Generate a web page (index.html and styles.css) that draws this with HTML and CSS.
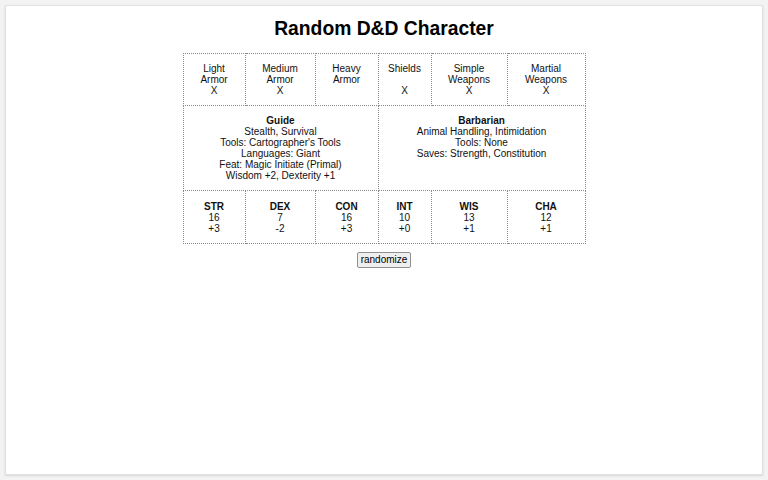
FILE: index.html
```html
<!DOCTYPE html>
<html lang="en">
<head>
<meta charset="utf-8">
<title>Random D&amp;D Character</title>
<link rel="stylesheet" href="styles.css">
</head>
<body>
<main class="card">
  <h1 class="title">Random D&amp;D Character</h1>
  <table class="sheet">
    <colgroup>
      <col class="c1"><col class="c2"><col class="c3"><col class="c4"><col class="c5"><col class="c6">
    </colgroup>
    <tr class="prof">
      <td>Light<br>Armor<br>X</td>
      <td>Medium<br>Armor<br>X</td>
      <td>Heavy<br>Armor<br>&nbsp;</td>
      <td>Shields<br>&nbsp;<br>X</td>
      <td>Simple<br>Weapons<br>X</td>
      <td>Martial<br>Weapons<br>X</td>
    </tr>
    <tr class="origin">
      <td colspan="3"><b>Guide</b><br>Stealth, Survival<br>Tools: Cartographer's Tools<br>Languages: Giant<br>Feat: Magic Initiate (Primal)<br>Wisdom +2, Dexterity +1</td>
      <td colspan="3"><b>Barbarian</b><br>Animal Handling, Intimidation<br>Tools: None<br>Saves: Strength, Constitution</td>
    </tr>
    <tr class="stats">
      <td><b>STR</b><br>16<br>+3</td>
      <td><b>DEX</b><br>7<br>-2</td>
      <td><b>CON</b><br>16<br>+3</td>
      <td><b>INT</b><br>10<br>+0</td>
      <td><b>WIS</b><br>13<br>+1</td>
      <td><b>CHA</b><br>12<br>+1</td>
    </tr>
  </table>
  <button class="randomize" type="button">randomize</button>
</main>
</body>
</html>
```

FILE: styles.css
```css
html, body {
  margin: 0;
  padding: 0;
}

body {
  background: #f3f3f3;
  padding: 5px;
  font-family: "Liberation Sans", Arial, sans-serif;
  color: #111;
}

.card {
  box-sizing: border-box;
  height: 470px;
  background: #fff;
  border: 1px solid #e0e0e0;
  box-shadow: 0 1px 2px rgba(0, 0, 0, 0.12);
  display: flex;
  flex-direction: column;
  align-items: center;
  padding-top: 11px;
}

.title {
  margin: 0 0 13px;
  font-size: 19.3px;
  line-height: 23px;
  font-weight: bold;
  color: #000;
}

.sheet {
  border-collapse: collapse;
  table-layout: fixed;
  width: 402px;
  font-size: 10px;
  line-height: 11px;
}

.c1 { width: 62px; }
.c2 { width: 70px; }
.c3 { width: 63px; }
.c4 { width: 53px; }
.c5 { width: 76px; }
.c6 { width: 78px; }

.sheet td {
  border: 1px dotted #8a8a8a;
  text-align: center;
  vertical-align: top;
  padding: 9px 2px;
}

.stats td {
  padding: 10px 2px 9px;
}

.randomize {
  margin-top: 8px;
  font-family: "Liberation Sans", Arial, sans-serif;
  font-size: 10px;
  line-height: 11px;
  padding: 1px 3px 2px;
  color: #000;
  background: #efefef;
  border: 1px solid #8f8f8f;
  border-radius: 2px;
}
```
